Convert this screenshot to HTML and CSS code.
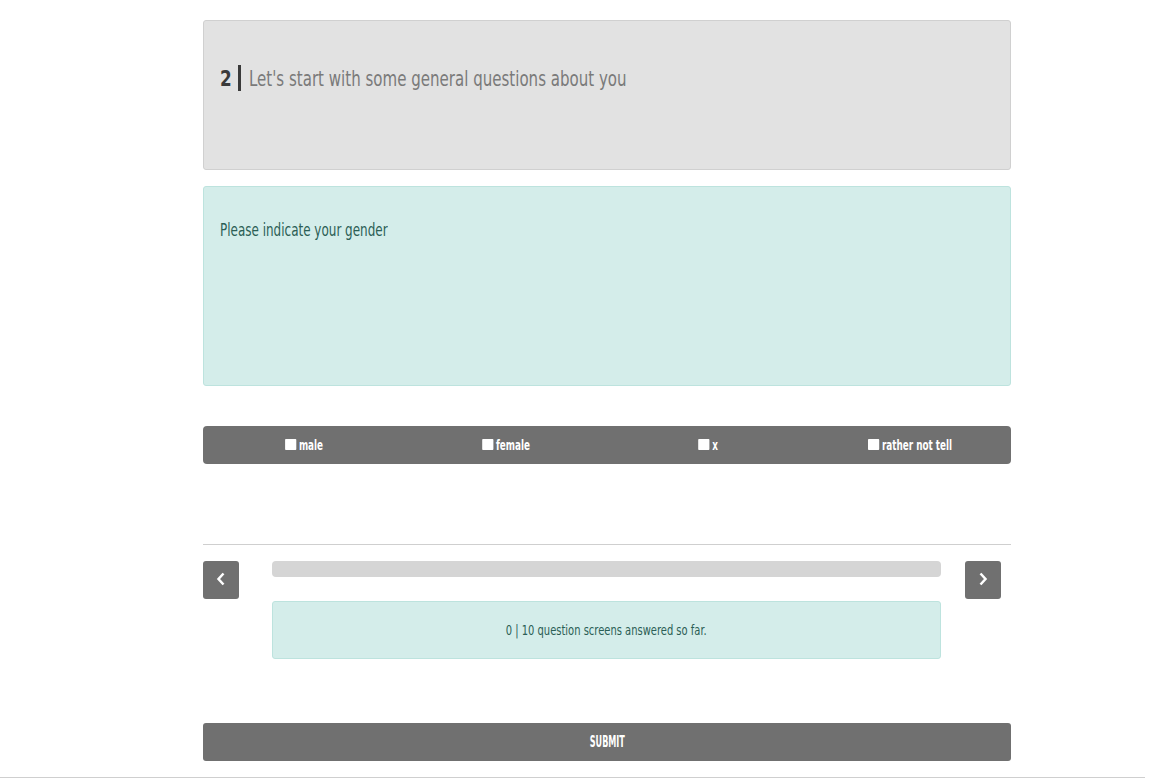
FILE: index.html
```html
<!DOCTYPE html>
<html>
<head>
<meta charset="utf-8">
<link rel="stylesheet" href="styles.css">
</head>
<body>
<div class="page">
  <div class="wrap">
    <div class="head-box">
      <h2 class="head"><span class="num">2</span><span class="sep"></span><span class="title">Let's start with some general questions about you</span></h2>
    </div>
    <div class="question">
      <p class="qtext">Please indicate your gender</p>
    </div>
    <div class="options">
      <label class="opt"><span class="box"></span>male</label>
      <label class="opt"><span class="box"></span>female</label>
      <label class="opt"><span class="box"></span>x</label>
      <label class="opt"><span class="box"></span>rather not tell</label>
    </div>
    <div class="rule"></div>
    <div class="nav">
      <button class="navbtn"><svg width="12" height="14" viewBox="0 0 12 14"><path d="M8.5 1.5 L3.5 7 L8.5 12.5" fill="none" stroke="#fff" stroke-width="2.5"/></svg></button>
      <div class="mid">
        <div class="progress"></div>
        <div class="info"><span class="info-text">0 | 10 question screens answered so far.</span></div>
      </div>
      <button class="navbtn"><svg width="12" height="14" viewBox="0 0 12 14"><path d="M3.5 1.5 L8.5 7 L3.5 12.5" fill="none" stroke="#fff" stroke-width="2.5"/></svg></button>
    </div>
    <button class="submit"><span class="submit-text">SUBMIT</span></button>
  </div>
  <div class="bottom-line"></div>
</div>
</body>
</html>
```
FILE: styles.css
```css
html, body {
  margin: 0;
  padding: 0;
  background: #fff;
}
body {
  font-family: "DejaVu Sans Condensed", "Liberation Sans", sans-serif;
}
.page {
  width: 1171px;
  height: 779px;
  overflow: hidden;
  position: relative;
}
.wrap {
  width: 808px;
  margin-left: 203px;
  padding-top: 20px;
  display: flex;
  flex-direction: column;
}
.head-box {
  height: 148px;
  background: #e2e2e2;
  border: 1px solid #d0d0d0;
  border-radius: 3px;
  padding: 0 16px;
}
.head {
  margin: 40px 0 0 0;
  font-size: 22px;
  font-weight: normal;
  display: flex;
  align-items: center;
  height: 34px;
  white-space: nowrap;
}
.num {
  display: inline-block;
  font-weight: bold;
  color: #3a3a3a;
  transform: scaleX(0.85);
  transform-origin: left center;
  width: 12px;
}
.sep {
  display: inline-block;
  width: 3px;
  height: 26px;
  background: #3a3a3a;
  margin: 0 8px 0 6px;
}
.title {
  display: inline-block;
  color: #7a7a7a;
  transform: scaleX(0.76);
  transform-origin: left center;
}
.question {
  margin-top: 16px;
  height: 198px;
  background: #d4edea;
  border: 1px solid #bde3de;
  border-radius: 3px;
  padding: 0 16px;
}
.qtext {
  display: inline-block;
  margin: 32px 0 0 0;
  font-size: 18px;
  color: #2b5e55;
  white-space: nowrap;
  transform: scaleX(0.74);
  transform-origin: left center;
}
.options {
  margin-top: 40px;
  height: 38px;
  background: #707070;
  border-radius: 4px;
  display: grid;
  grid-template-columns: repeat(4, 1fr);
  align-items: center;
}
.opt {
  display: flex;
  justify-content: center;
  align-items: center;
  color: #fff;
  font-size: 14px;
  font-weight: bold;
  white-space: nowrap;
  transform: scaleX(0.7);
  transform-origin: center;
}
.box {
  display: inline-block;
  width: 16px;
  height: 11px;
  background: #fff;
  border-radius: 1px;
  margin-right: 4px;
  position: relative;
  top: -1px;
}
.rule {
  margin-top: 80px;
  height: 1px;
  background: #cfcfcf;
}
.nav {
  margin-top: 16px;
  display: flex;
  align-items: flex-start;
}
.navbtn {
  width: 36px;
  height: 38px;
  border: none;
  border-radius: 3px;
  background: #707070;
  display: flex;
  align-items: center;
  justify-content: center;
  padding: 0 0 3px 0;
  margin: 0;
}
.nav .navbtn:last-child {
  margin-left: 24px;
}
.mid {
  margin-left: 33px;
  width: 669px;
}
.progress {
  height: 16px;
  background: #d5d5d5;
  border-radius: 4px;
}
.info {
  margin-top: 24px;
  height: 56px;
  background: #d4edea;
  border: 1px solid #bde3de;
  border-radius: 3px;
  display: flex;
  align-items: center;
  justify-content: center;
  font-size: 14px;
  color: #2b5e55;
  padding-bottom: 1px;
  box-sizing: border-box;
  height: 58px;
}
.info-text {
  display: inline-block;
  white-space: nowrap;
  transform: scaleX(0.79);
}
.submit {
  margin-top: 64px;
  height: 38px;
  background: #707070;
  border: none;
  border-radius: 3px;
  color: #fff;
  font-family: inherit;
  font-size: 15px;
  font-weight: bold;
  padding: 0;
}
.submit-text {
  display: inline-block;
  transform: scaleX(0.6);
}
.bottom-line {
  position: absolute;
  left: 0;
  bottom: 1px;
  width: 1145px;
  height: 1px;
  background: #cfcfcf;
}
```
